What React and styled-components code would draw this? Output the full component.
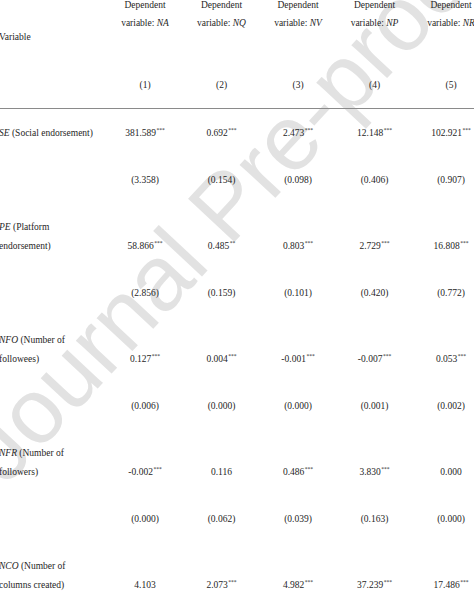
import React from "react";
import styled, { createGlobalStyle } from "styled-components";

const Global = createGlobalStyle`
  html, body { margin: 0; padding: 0; background: #ffffff; overflow: hidden; }
  #root { width: 474px; height: 591px; overflow: hidden; position: relative; }
`;

const Page = styled.div`
  position: relative;
  width: 474px;
  height: 591px;
  overflow: hidden;
  background: #ffffff;
  font-family: "Liberation Serif", "Times New Roman", serif;
  font-size: 9.5px;
  color: #262626;
`;

const Watermark = styled.div`
  position: absolute;
  left: 225px;
  top: 205px;
  transform: translate(-50%, -50%) rotate(-47deg);
  font-family: "Liberation Sans", Arial, sans-serif;
  font-size: 92px;
  white-space: nowrap;
  color: #e2e2e2;
  z-index: 0;
  pointer-events: none;
  line-height: 1;
`;

const Table = styled.div`
  position: relative;
  z-index: 1;
  display: grid;
  grid-template-columns: 107.75px repeat(5, 76.5px);
  margin-top: -33.6px;
  margin-left: -1px;
  line-height: 18.6px;
  white-space: nowrap;
`;

const VariableHead = styled.div`
  grid-row: 1 / span 2;
  grid-column: 1;
  align-self: center;
  text-align: left;
`;

const DepHead = styled.div`
  grid-row: 1;
  height: 96px;
  display: flex;
  flex-direction: column;
  justify-content: center;
  align-items: center;
  text-align: center;
`;

const NumHead = styled.div`
  grid-row: 2;
  height: 45.2px;
  display: flex;
  align-items: center;
  justify-content: center;
`;

const Rule = styled.div`
  grid-column: 1 / -1;
  height: 1.8px;
  background: #8a8a8a;
  margin-left: 1px;
`;

const LabelCell = styled.div`
  grid-column: 1;
  padding: 14.3px 0;
  text-align: left;
`;

const ValueCell = styled.div`
  padding: 14.3px 0;
  text-align: center;
  align-self: end;
`;

const Stars = styled.sup`
  font-size: 5.5px;
  line-height: 0;
  vertical-align: 3.6px;
  margin-left: 0.5px;
`;

const It = styled.i`
  font-style: italic;
`;

const deps = ["NA", "NQ", "NV", "NP", "NR"];

const rows = [
  { label: [<><It>SE</It> (Social endorsement)</>],
    values: [["381.589", "***"], ["0.692", "***"], ["2.473", "***"], ["12.148", "***"], ["102.921", "***"]] },
  { label: [""], values: [["(3.358)"], ["(0.154)"], ["(0.098)"], ["(0.406)"], ["(0.907)"]] },
  { label: [<><It>PE</It> (Platform</>, "endorsement)"],
    values: [["58.866", "***"], ["0.485", "**"], ["0.803", "***"], ["2.729", "***"], ["16.808", "***"]] },
  { label: [""], values: [["(2.856)"], ["(0.159)"], ["(0.101)"], ["(0.420)"], ["(0.772)"]] },
  { label: [<><It>NFO</It> (Number of</>, "followees)"],
    values: [["0.127", "***"], ["0.004", "***"], ["-0.001", "***"], ["-0.007", "***"], ["0.053", "***"]] },
  { label: [""], values: [["(0.006)"], ["(0.000)"], ["(0.000)"], ["(0.001)"], ["(0.002)"]] },
  { label: [<><It>NFR</It> (Number of</>, "followers)"],
    values: [["-0.002", "***"], ["0.116"], ["0.486", "***"], ["3.830", "***"], ["0.000"]] },
  { label: [""], values: [["(0.000)"], ["(0.062)"], ["(0.039)"], ["(0.163)"], ["(0.000)"]] },
  { label: [<><It>NCO</It> (Number of</>, "columns created)"],
    values: [["4.103"], ["2.073", "***"], ["4.982", "***"], ["37.239", "***"], ["17.486", "***"]] },
];

export default function App() {
  return (
    <Page>
      <Global />
      <Watermark>Journal Pre-proof</Watermark>
      <Table>
        <VariableHead>Variable</VariableHead>
        {deps.map((d) => (
          <DepHead key={d}>
            <span>Dependent</span>
            <span>variable: <It>{d}</It></span>
          </DepHead>
        ))}
        {deps.map((d, i) => (
          <NumHead key={"n" + d}>({i + 1})</NumHead>
        ))}
        <Rule />
        {rows.map((r, ri) => (
          <React.Fragment key={ri}>
            <LabelCell>
              {r.label.map((l, li) => (
                <div key={li}>{l === "" ? "\u00a0" : l}</div>
              ))}
            </LabelCell>
            {r.values.map(([v, s], vi) => (
              <ValueCell key={vi}>
                {v}
                {s && <Stars>{s}</Stars>}
              </ValueCell>
            ))}
          </React.Fragment>
        ))}
      </Table>
    </Page>
  );
}
